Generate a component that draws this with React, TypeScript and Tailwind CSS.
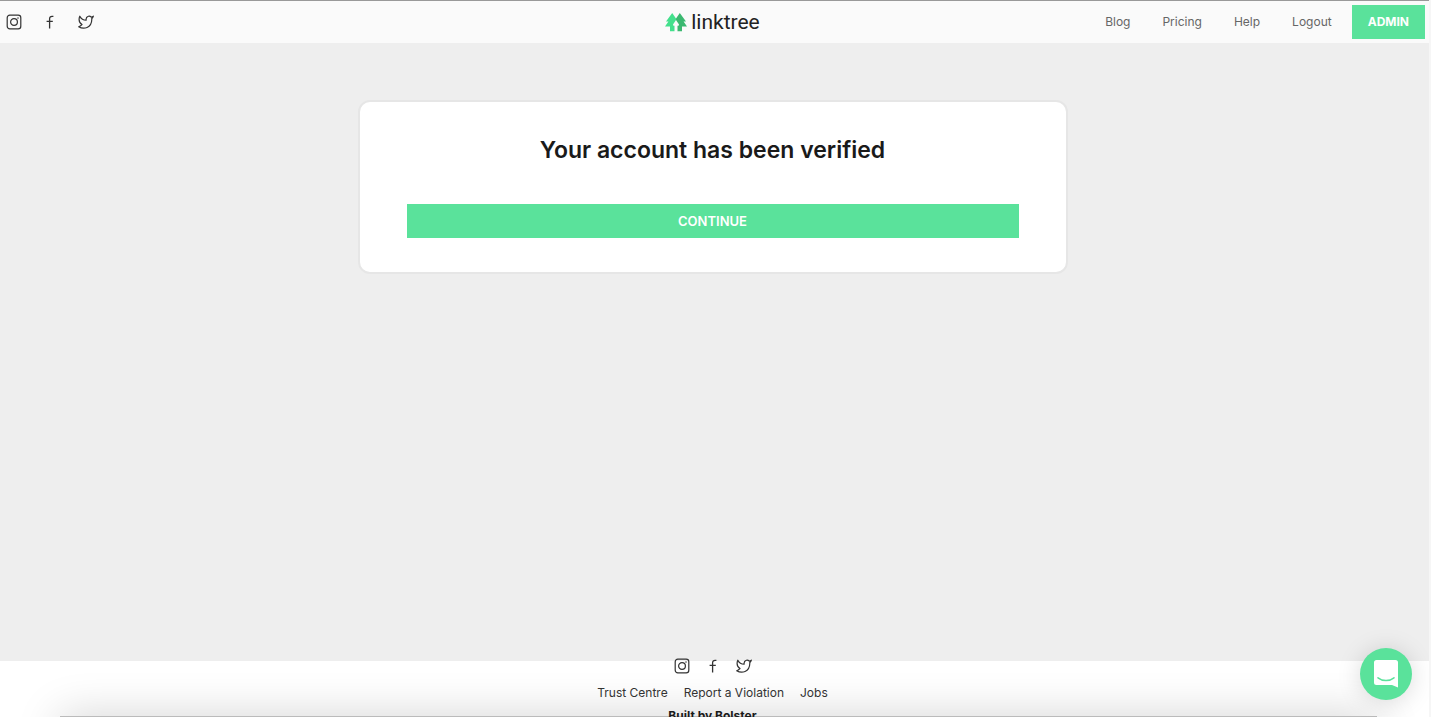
import { clsx } from 'clsx';

const navLinks = [
  { href: '#blog', label: 'Blog' },
  { href: '#pricing', label: 'Pricing' },
  { href: '#help', label: 'Help' },
  { href: '#logout', label: 'Logout' },
];

const footerLinks = [
  { href: '#trust', label: 'Trust Centre' },
  { href: '#report', label: 'Report a Violation' },
  { href: '#jobs', label: 'Jobs' },
];

function InstagramIcon() {
  return (
    <svg className="w-4 h-4" viewBox="0 0 16 16" fill="none" stroke="currentColor" strokeWidth="1.2">
      <rect x="1.2" y="1.2" width="13.6" height="13.6" rx="2.6" />
      <circle cx="8" cy="8" r="3.4" />
      <circle cx="12" cy="4" r="0.5" fill="currentColor" strokeWidth="0.4" />
    </svg>
  );
}

function FacebookIcon() {
  return (
    <svg className="w-4 h-4" viewBox="0 0 16 16" fill="none" stroke="currentColor" strokeWidth="1.3">
      <path d="M11.4 2.4H10c-1.5 0-2.4.9-2.4 2.4v9.6M4.6 7.3h6.2" />
    </svg>
  );
}

function TwitterIcon() {
  return (
    <svg className="w-4 h-4" viewBox="0 0 16 16" fill="none" stroke="currentColor" strokeWidth="1.2" strokeLinejoin="round">
      <path d="M15.4 2.2c-.7.5-1.3.8-2.1 1C12.4 2.2 11.3 1.8 10.3 2.2 8.9 2.7 8 3.9 8.1 5.5v.7C5.5 6.2 3.3 5.1 1.8 2.2c0 0-2.6 5.5 2.2 8.3C3.2 11.3 2 12.4.7 12.8c5 2.9 12.9 1.4 13.1-7.3 0-.3 0-.5-.1-.7.8-.7 1.4-1.5 1.7-2.6z" />
    </svg>
  );
}

function Socials({ className }: { className?: string }) {
  return (
    <div className={clsx('flex items-center text-[#333333]', className)}>
      <a href="#instagram" aria-label="Instagram"><InstagramIcon /></a>
      <a href="#facebook" aria-label="Facebook"><FacebookIcon /></a>
      <a href="#twitter" aria-label="Twitter"><TwitterIcon /></a>
    </div>
  );
}

function Logo() {
  return (
    <a href="#home" className="flex items-center gap-1 text-[#222222]">
      <svg className="w-[22px] h-5" viewBox="0 0 22 20">
        <path d="M7.2 1 11 6.4V8L8 12.6 8.400 13.800H9.500V19.200H5V14.600H0L3.400 9.400H1z" fill="#43e08c" />
        <path d="M14.800 1 11 6.400V8L14 12.600 13.600 13.800H12.500V19.200H17V14.600H22L18.600 9.400H21z" fill="#3bb870" />
      </svg>
      <span className="font-['Roboto',sans-serif] text-[21px] leading-6">linktree</span>
    </a>
  );
}

export default function App() {
  return (
    <div className="relative flex h-screen flex-col overflow-hidden border-r-2 border-[#f6f6f6] bg-[#eeeeee] font-['Inter',sans-serif] text-[#1a1a1a]">
      <header className="grid grid-cols-[1fr_auto_1fr] items-center border-t border-[#999999] bg-[#fafafa] py-1 pr-1">
        <Socials className="gap-5 pl-1.5" />
        <Logo />
        <div className="flex items-center justify-end gap-5">
          <nav className="flex gap-8 text-xs text-[#666666]">
            {navLinks.map(({ href, label }) => (
              <a key={href} href={href}>{label}</a>
            ))}
          </nav>
          <button className="bg-[#5ae29b] px-4 text-xs font-bold leading-[34px] text-white">ADMIN</button>
        </div>
      </header>

      <main className="flex-1 pt-[57px] pr-1">
        <section className="mx-auto max-w-[710px] rounded-xl border-2 border-[#e6e6e6] bg-white px-[47px] pt-8 pb-[34px] text-center">
          <h1 className="text-[23px] font-semibold leading-8">Your account has been verified</h1>
          <button className="mt-[38px] w-full bg-[#5ae29b] text-[13px] font-semibold leading-[34px] text-white">
            CONTINUE
          </button>
        </section>
      </main>

      <footer className="relative h-14 shrink-0 bg-white pr-1">
        {/* shadow rising from the bottom edge */}
        <div className="absolute inset-0 overflow-hidden">
          <div className="absolute top-[55px] left-15 right-13 h-10 bg-[#bbbbbb] shadow-[0_0_45px_rgba(0,0,0,0.18)]" />
        </div>
        <div className="relative -mt-[3px] flex flex-col items-center">
          <Socials className="gap-[15px]" />
          <nav className="mt-[11px] flex gap-4 text-xs text-[#333333]">
            {footerLinks.map(({ href, label }) => (
              <a key={href} href={href}>{label}</a>
            ))}
          </nav>
          <p className="mt-[7px] text-xs font-bold">Built by Bolster</p>
        </div>
      </footer>

      <button
        aria-label="Open chat"
        className="absolute right-[17px] bottom-[17px] flex h-[52px] w-[52px] items-center justify-center rounded-full bg-[#5ae29b] shadow-[0_2px_24px_rgba(0,0,0,0.15)]"
      >
        <svg className="w-7 h-7" viewBox="0 0 28 28">
          <path d="M4.5 0h19A2.5 2.5 0 0 1 26 2.5V27.5l-6-2.5H4.5A2.5 2.5 0 0 1 2 22.5V2.5A2.5 2.5 0 0 1 4.5 0z" fill="#fff" />
          <path d="M6 17.8c4.5 3.6 11.5 3.6 16 0" fill="none" stroke="#5ae29b" strokeWidth="1.5" strokeLinecap="round" />
        </svg>
      </button>
    </div>
  );
}
